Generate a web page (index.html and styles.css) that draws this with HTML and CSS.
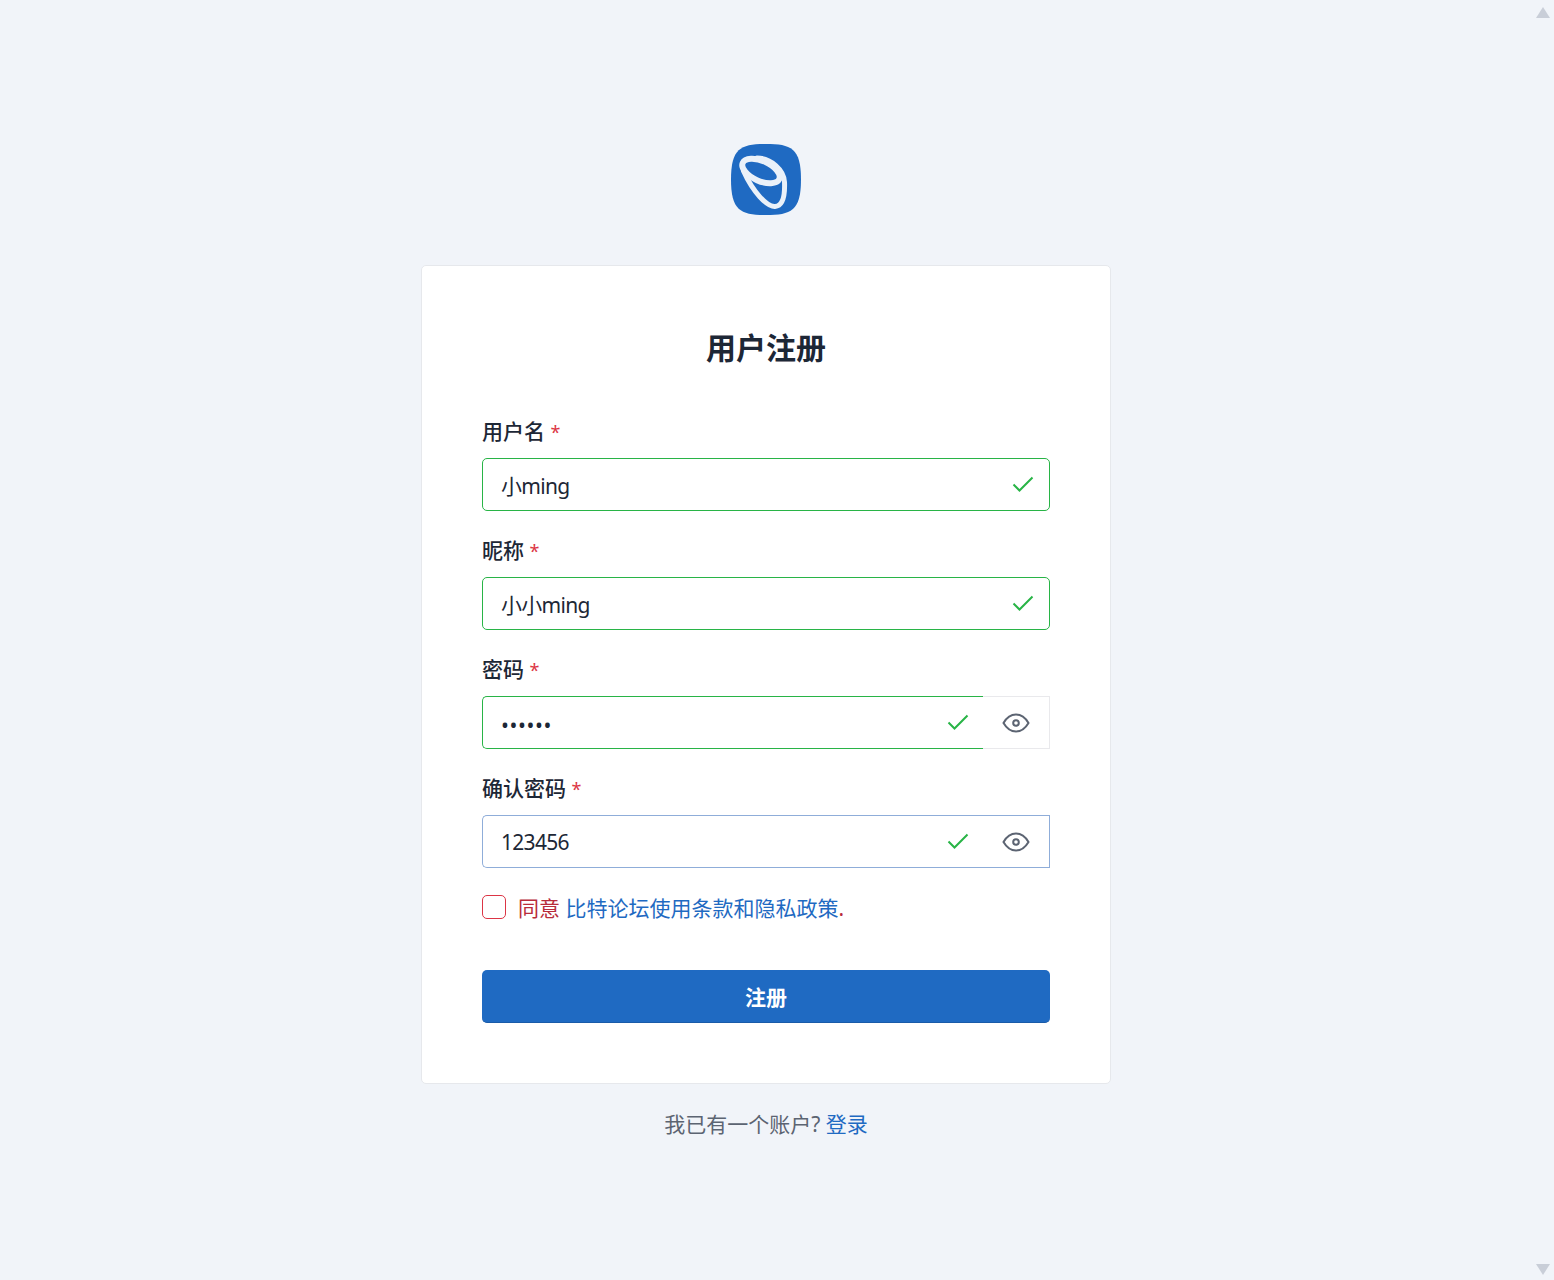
FILE: index.html
```html
<!DOCTYPE html>
<html lang="zh-CN">
<head>
    <meta charset="UTF-8">
    <meta name="viewport" content="width=device-width, initial-scale=1.0">
    <title>用户注册</title>
    <link rel="stylesheet" href="styles.css">
</head>
<body>

    <main class="page">
        <!-- Logo -->
        <svg class="logo" viewBox="0 0 70 71" aria-label="logo">
            <path d="M35 0C60 0 70 4 70 35.500C70 67 60 71 35 71C10 71 0 67 0 35.500C0 4 10 0 35 0Z" fill="#1f6ac2"/>
            <g fill="none" stroke="#eaf1f9" stroke-linecap="round">
                <ellipse cx="30" cy="27" rx="20" ry="10" stroke-width="6" transform="rotate(24 30 27)"/>
                <path d="M26 14C40 14 53 26 53.500 38C54 50 52 62 44 62.500C36 63 22 48 12.500 27" stroke-width="5"/>
            </g>
        </svg>

        <!-- Register Form -->
        <form class="card">
            <h1 class="card-title">用户注册</h1>

            <div class="field">
                <label class="field-label">用户名 <span class="required">*</span></label>
                <div class="input-box valid">
                    <input class="text-input" type="text" value="小ming">
                    <svg class="check" viewBox="0 0 22 16"><path d="M1.500 8.500L7.500 14.500L20.500 1.500"/></svg>
                </div>
            </div>

            <div class="field">
                <label class="field-label">昵称 <span class="required">*</span></label>
                <div class="input-box valid">
                    <input class="text-input" type="text" value="小小ming">
                    <svg class="check" viewBox="0 0 22 16"><path d="M1.500 8.500L7.500 14.500L20.500 1.500"/></svg>
                </div>
            </div>

            <div class="field">
                <label class="field-label">密码 <span class="required">*</span></label>
                <div class="input-group">
                    <div class="input-box valid group-main">
                        <input class="text-input password-input" type="password" value="123456">
                        <svg class="check" viewBox="0 0 22 16"><path d="M1.500 8.500L7.500 14.500L20.500 1.500"/></svg>
                    </div>
                    <button class="eye-button" type="button">
                        <svg class="eye" viewBox="0 0 28 20"><path d="M1.500 10C5 4 9 1.500 14 1.500C19 1.500 23 4 26.500 10C23 16 19 18.500 14 18.500C9 18.500 5 16 1.500 10Z"/><circle cx="14" cy="10" r="2.800"/></svg>
                    </button>
                </div>
            </div>

            <div class="field">
                <label class="field-label">确认密码 <span class="required">*</span></label>
                <div class="input-group focused">
                    <div class="input-box group-main">
                        <input class="text-input" type="text" value="123456">
                        <svg class="check" viewBox="0 0 22 16"><path d="M1.500 8.500L7.500 14.500L20.500 1.500"/></svg>
                    </div>
                    <button class="eye-button" type="button">
                        <svg class="eye" viewBox="0 0 28 20"><path d="M1.500 10C5 4 9 1.500 14 1.500C19 1.500 23 4 26.500 10C23 16 19 18.500 14 18.500C9 18.500 5 16 1.500 10Z"/><circle cx="14" cy="10" r="2.800"/></svg>
                    </button>
                </div>
            </div>

            <label class="agree">
                <input class="agree-box" type="checkbox">
                <span>同意 <a class="link" href="#">比特论坛使用条款和隐私政策</a>.</span>
            </label>

            <button class="submit" type="button">注册</button>
        </form>

        <p class="login-hint">我已有一个账户? <a class="link" href="#">登录</a></p>
    </main>

    <!-- Scrollbar -->
    <div class="scrollbar">
        <span class="arrow arrow-up"></span>
        <span class="arrow arrow-down"></span>
    </div>

</body>
</html>
```

FILE: styles.css
```css
* {
    box-sizing: border-box;
}
body {
    margin: 0;
    height: 1280px;
    overflow: hidden;
    display: flex;
    background-color: #f1f4f9;
    color: #1d2736;
    font-family: "Noto Sans", "Noto Sans CJK SC", sans-serif;
    font-size: 21px;
}
.page {
    flex: 1;
    display: flex;
    flex-direction: column;
    align-items: center;
    padding-top: 144px;
}
.logo {
    display: block;
    width: 70px;
    height: 71px;
    margin-bottom: 50px;
}
.card {
    width: 690px;
    height: 819px;
    padding: 60px;
    background-color: #fff;
    border: 1px solid #e6e8ec;
    border-radius: 5px;
}
.card-title {
    margin: 0 0 42px;
    height: 44px;
    font-size: 30px;
    line-height: 44px;
    font-weight: 700;
    text-align: center;
}
.field {
    margin-bottom: 20px;
}
.field-label {
    display: block;
    height: 46px;
    line-height: 38px;
    font-weight: 500;
}
.required {
    color: #dc3545;
    font-size: 18px;
    font-weight: 400;
}
.input-box {
    display: flex;
    align-items: center;
    height: 53px;
    padding-right: 15px;
    padding-bottom: 1px;
    background-color: #fff;
    border: 1px solid #ced4da;
    border-radius: 5px;
}
.input-box.valid {
    border-color: #28b446;
}
.text-input {
    flex: 1;
    min-width: 0;
    padding: 1px 0 0 18px;
    border: none;
    outline: none;
    background: none;
    color: #1d2736;
    font: inherit;
    letter-spacing: -0.7px;
}
.password-input {
    padding-top: 5px;
    letter-spacing: 0.6px;
}
.check {
    width: 22px;
    height: 16px;
    fill: none;
    stroke: #28b446;
    stroke-width: 2;
}
.input-group {
    display: flex;
    height: 53px;
}
.group-main {
    flex: 1;
    border-right: none;
    border-radius: 5px 0 0 5px;
    padding-right: 14px;
}
.eye-button {
    width: 67px;
    padding: 0;
    display: flex;
    align-items: center;
    justify-content: center;
    background-color: #fff;
    border: 1px solid #e9e9ec;
    border-left: none;
}
.eye {
    width: 28px;
    height: 20px;
    fill: none;
    stroke: #5c6472;
    stroke-width: 2;
}
.input-group.focused .group-main,
.input-group.focused .eye-button {
    border-color: #8fadd9;
}
.agree {
    display: flex;
    align-items: center;
    gap: 12px;
    margin-top: 26px;
    height: 26px;
    color: #b82c3a;
}
.agree-box {
    appearance: none;
    flex: none;
    width: 24px;
    height: 24px;
    margin: 0;
    background-color: #fff;
    border: 1px solid #dc3545;
    border-radius: 5px;
}
.link {
    color: #1f6ac2;
    text-decoration: none;
}
.submit {
    display: block;
    width: 100%;
    height: 53px;
    margin-top: 50px;
    background-color: #1f6ac2;
    color: #fff;
    border: none;
    border-bottom: 1px solid #1a5ba8;
    border-radius: 5px;
    font: inherit;
    font-weight: 700;
}
.login-hint {
    margin: 23px 0 0;
    line-height: 34px;
    color: #5c6472;
    text-align: center;
}
.scrollbar {
    flex: none;
    width: 22px;
    display: flex;
    flex-direction: column;
    justify-content: space-between;
    align-items: center;
    padding: 7px 0 5px;
}
.arrow {
    width: 0;
    height: 0;
    border-left: 7.500px solid transparent;
    border-right: 7.500px solid transparent;
}
.arrow-up {
    border-bottom: 11px solid #c9ced8;
}
.arrow-down {
    border-top: 11px solid #c9ced8;
}
```
